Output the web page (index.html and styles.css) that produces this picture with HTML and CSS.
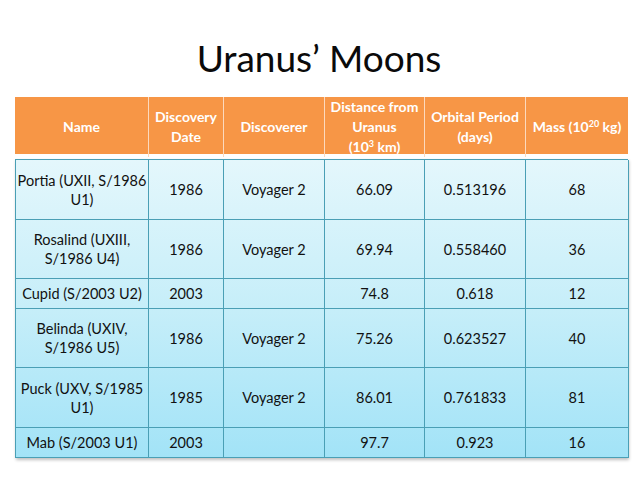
FILE: index.html
```html
<!DOCTYPE html>
<html>
<head>
<meta charset="utf-8">
<link rel="stylesheet" href="styles.css">
</head>
<body>
<div class="slide">
  <h1 class="title">Uranus’ Moons</h1>
  <div class="table">
    <div class="head">
      <div class="hc"><span>Name</span></div>
      <div class="hc"><span>Discovery<br>Date</span></div>
      <div class="hc"><span>Discoverer</span></div>
      <div class="hc"><span>Distance from<br>Uranus<br>(10<sup>3</sup> km)</span></div>
      <div class="hc"><span>Orbital Period<br>(days)</span></div>
      <div class="hc"><span>Mass (10<sup>20</sup> kg)</span></div>
    </div>
    <div class="body">
      <div class="c"><span>Portia (UXII, S/1986<br>U1)</span></div><div class="c">1986</div><div class="c">Voyager 2</div><div class="c">66.09</div><div class="c">0.513196</div><div class="c">68</div>
      <div class="c"><span>Rosalind (UXIII,<br>S/1986 U4)</span></div><div class="c">1986</div><div class="c">Voyager 2</div><div class="c">69.94</div><div class="c">0.558460</div><div class="c">36</div>
      <div class="c">Cupid (S/2003 U2)</div><div class="c">2003</div><div class="c"></div><div class="c">74.8</div><div class="c">0.618</div><div class="c">12</div>
      <div class="c"><span>Belinda (UXIV,<br>S/1986 U5)</span></div><div class="c">1986</div><div class="c">Voyager 2</div><div class="c">75.26</div><div class="c">0.623527</div><div class="c">40</div>
      <div class="c"><span>Puck (UXV, S/1985<br>U1)</span></div><div class="c">1985</div><div class="c">Voyager 2</div><div class="c">86.01</div><div class="c">0.761833</div><div class="c">81</div>
      <div class="c">Mab (S/2003 U1)</div><div class="c">2003</div><div class="c"></div><div class="c">97.7</div><div class="c">0.923</div><div class="c">16</div>
    </div>
  </div>
</div>
</body>
</html>
```
FILE: styles.css
```css
html, body {
  margin: 0;
  padding: 0;
  background: #ffffff;
}
.slide {
  width: 638px;
  height: 479px;
  font-family: Lato, "Open Sans", sans-serif;
  color: #111;
  padding-top: 35px;
  box-sizing: border-box;
}
.title {
  margin: 0;
  font-weight: 400;
  font-size: 37px;
  line-height: 46px;
  text-align: center;
  color: #0a0a0a;
  height: 62px;
}
.table {
  margin-left: 15px;
  width: 613px;
}
.head {
  display: grid;
  grid-template-columns: 133px 75px 101px 100px 101px 103px;
  height: 57px;
  background: #f79646;
}
.hc {
  display: flex;
  align-items: center;
  justify-content: center;
  text-align: center;
  color: #ffffff;
  font-weight: 700;
  font-size: 14px;
  line-height: 20px;
  border-left: 1px solid #fcd9bd;
  white-space: nowrap;
}
.hc:first-child { border-left: none; }
.hc sup { font-size: 9px; line-height: 0; vertical-align: 5px; }
.body {
  margin-top: 5px;
  display: grid;
  grid-template-columns: 133px 75px 101px 100px 101px 103px;
  grid-template-rows: 60px 59px 30px 59px 60px 30px;
  border-left: 1px solid #4a9fb5;
  border-top: 1px solid #4a9fb5;
  background: linear-gradient(to bottom, #e4f7fc 0%, #c6eef9 50%, #a2e3f7 100%);
  box-shadow: 1px 2px 3px rgba(0,0,0,0.25);
}
.c {
  display: flex;
  align-items: center;
  justify-content: center;
  text-align: center;
  font-size: 14.5px;
  line-height: 19px;
  border-right: 1px solid #4a9fb5;
  border-bottom: 1px solid #4a9fb5;
}
```
